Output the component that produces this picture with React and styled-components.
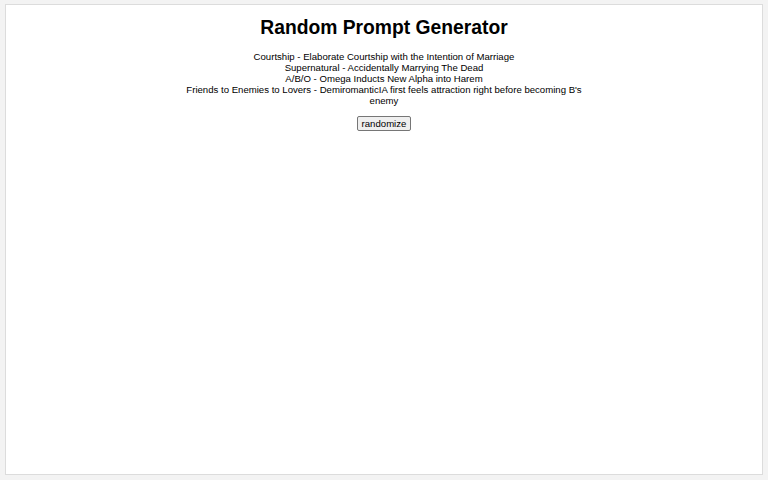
import React, { useState } from 'react';
import styled, { createGlobalStyle } from 'styled-components';

const prompts = [
  'Courtship - Elaborate Courtship with the Intention of Marriage',
  'Supernatural - Accidentally Marrying The Dead',
  'A/B/O - Omega Inducts New Alpha into Harem',
  "Friends to Enemies to Lovers - DemiromanticIA first feels attraction right before becoming B's enemy",
];

const GlobalStyle = createGlobalStyle`
  html, body {
    margin: 0;
    padding: 0;
    background: #f3f3f3;
    font-family: "Liberation Sans", Arial, sans-serif;
  }
`;

const Page = styled.div`
  box-sizing: border-box;
  margin: 4px 5px 0 5px;
  height: 471px;
  background: #fff;
  border: 1px solid #dcdcdc;
  display: flex;
  flex-direction: column;
  align-items: center;
`;

const Title = styled.h1`
  margin: 12px 0 12px;
  font-size: 19.3px;
  font-weight: bold;
  color: #000;
`;

const PromptList = styled.div`
  max-width: 400px;
  text-align: center;
  font-size: 9.6px;
  line-height: 11px;
  color: #000;
`;

const Line = styled.div``;

const Button = styled.button`
  margin-top: 10px;
  font-family: "Liberation Sans", Arial, sans-serif;
  font-size: 9.6px;
  padding: 1px 4px;
  background: #efefef;
  border: 1px solid #767676;
  border-radius: 2px;
  color: #000;
`;

const App = () => {
  const [list] = useState(prompts);
  return (
    <>
      <GlobalStyle />
      <Page>
        <Title>Random Prompt Generator</Title>
        <PromptList>
          {list.map(p => (
            <Line key={p}>{p}</Line>
          ))}
        </PromptList>
        <Button>randomize</Button>
      </Page>
    </>
  );
};

export default App;
